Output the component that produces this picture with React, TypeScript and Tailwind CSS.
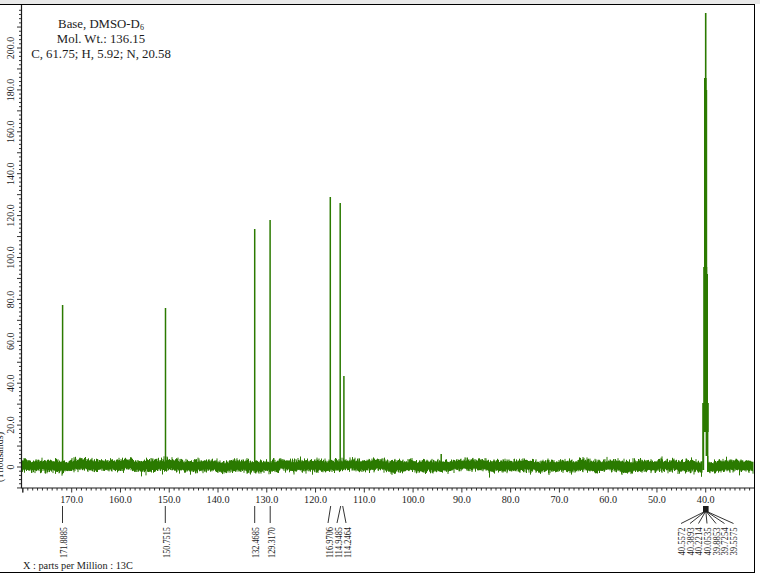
import React from "react";

const GREEN = "#2b7a00";
const INK = "#1c1c1c";

// ppm -> pixel on the page
const xOf = (ppm: number) => 71.7 + (170 - ppm) * 4.877;
const yOf = (val: number) => 467 - val * 2.095;

// small seeded generator so the noise stays the same on each load
const makeRand = (seed: number) => () => {
  seed = (seed + 0x6d2b79f5) | 0;
  let t = Math.imul(seed ^ (seed >>> 15), 1 | seed);
  t = (t + Math.imul(t ^ (t >>> 7), 61 | t)) ^ t;
  return ((t ^ (t >>> 14)) >>> 0) / 4294967296;
};

const buildNoise = () => {
  const rand = makeRand(1337);
  const gauss = () => Math.abs(rand() + rand() + rand() - 1.5) * 2;
  let d = "";
  let drift = 0;
  for (let x = 22; x < 753.5; x += 0.5) {
    if (x > 702 && x < 708.5) continue;
    drift += (rand() - 0.5) * 0.8;
    drift *= 0.95;
    const spikeUp = rand() > 0.94 ? rand() * 3 : 0;
    const spikeDown = rand() > 0.94 ? rand() * 3.5 : 0;
    const top = 465.8 + drift - 3.4 - gauss() * 1.8 - spikeUp;
    const bottom = 465.8 + drift + 3.4 + gauss() * 1.8 + spikeDown;
    d += `M${x} ${top.toFixed(1)}L${x} ${bottom.toFixed(1)}`;
  }
  return d;
};

const peaks = [
  { x: 62.6, top: 305 },
  { x: 165.5, top: 308 },
  { x: 254.7, top: 229 },
  { x: 270.1, top: 220 },
  { x: 330.3, top: 197 },
  { x: 340.2, top: 203 },
  { x: 343.9, top: 376 },
  { x: 441.2, top: 454 },
];

const singleLabels = [
  { x: 62.5, text: "171.8885" },
  { x: 165.3, text: "150.7515" },
  { x: 254.7, text: "132.4685" },
  { x: 270.2, text: "129.3170" },
];

const slantLabels = [
  { from: 330.7, to: 328, labelX: 329, text: "116.9706" },
  { from: 340.7, to: 337, labelX: 338, text: "114.9485" },
  { from: 342.7, to: 346, labelX: 347, text: "114.2464" },
];

const solventLabels = [
  { x: 681, text: "40.5572" },
  { x: 690, text: "40.3893" },
  { x: 698.5, text: "40.2214" },
  { x: 707, text: "40.0535" },
  { x: 716, text: "39.8853" },
  { x: 724.5, text: "39.7254" },
  { x: 733.5, text: "39.5575" },
];

const xMajor = [170, 160, 150, 140, 130, 120, 110, 100, 90, 80, 70, 60, 50, 40];
const yMajor = [200, 180, 160, 140, 120, 100, 80, 60, 40, 20];

const Spectrum = () => {
  const xTicks: number[] = [];
  for (let p = 180; p >= 30; p--) {
    const x = xOf(p);
    if (x >= 22 && x <= 754) xTicks.push(p);
  }
  const yTicks: number[] = [];
  for (let v = -10; v <= 220; v += 2) {
    const y = yOf(v);
    if (y > 8 && y <= 488) yTicks.push(v);
  }

  return (
    <svg viewBox="0 5 754 567" className="block w-[754px] h-[567px]" style={{ fontFamily: '"Liberation Serif", serif' }}>
      {/* noise band */}
      <path d={buildNoise()} stroke={GREEN} strokeWidth={1} fill="none" />

      {/* peaks */}
      {peaks.map((p) => (
        <line key={p.x} x1={p.x} x2={p.x} y1={p.top} y2={464} stroke={GREEN} strokeWidth={1.5} />
      ))}

      {/* DMSO multiplet */}
      <g fill={GREEN}>
        <rect x={704.9} y={13} width={1.6} height={65} />
        <rect x={704} y={78} width={2.8} height={12} />
        <rect x={704} y={90} width={3.2} height={177} />
        <rect x={703.2} y={267} width={4.2} height={7} />
        <rect x={703.2} y={274} width={4.8} height={129} />
        <rect x={702.2} y={403} width={6.6} height={29} />
        <rect x={702.2} y={432} width={2} height={38} />
        <rect x={705.6} y={432} width={2.8} height={24} />
        <rect x={707} y={456} width={1.6} height={16} />
      </g>

      {/* left axis */}
      <line x1={21.5} x2={21.5} y1={5} y2={488} stroke={INK} strokeWidth={1.2} />
      {yTicks.map((v) => (
        <line
          key={v}
          x1={v % 10 === 0 ? 17 : 19}
          x2={21.5}
          y1={yOf(v)}
          y2={yOf(v)}
          stroke={INK}
          strokeWidth={0.9}
        />
      ))}
      {yMajor.map((v) => (
        <text
          key={v}
          transform={`translate(14 ${yOf(v)}) rotate(-90)`}
          textAnchor="middle"
          fontSize={10}
          fill={INK}
        >
          {v.toFixed(1)}
        </text>
      ))}
      <text transform={`translate(14 ${yOf(0)}) rotate(-90)`} textAnchor="middle" fontSize={10} fill={INK}>
        0
      </text>
      <text transform="translate(3 482) rotate(-90)" fontSize={10} fill={INK}>
        (Thousands)
      </text>

      {/* bottom axis */}
      <line x1={21} x2={754} y1={488} y2={488} stroke={INK} strokeWidth={1.1} />
      {xTicks.map((p) => (
        <line
          key={p}
          x1={xOf(p)}
          x2={xOf(p)}
          y1={488}
          y2={p % 10 === 0 ? 492.5 : 490.5}
          stroke={INK}
          strokeWidth={0.9}
        />
      ))}
      <line x1={22.7} x2={22.7} y1={488} y2={492.5} stroke={INK} strokeWidth={0.9} />
      {xMajor.map((p) => (
        <text key={p} x={xOf(p)} y={502.5} textAnchor="middle" fontSize={10.2} fill={INK}>
          {p.toFixed(1)}
        </text>
      ))}

      {/* peak picks */}
      {singleLabels.map((l) => (
        <g key={l.text}>
          <line x1={l.x} x2={l.x} y1={506} y2={523} stroke={INK} strokeWidth={0.9} />
          <text
            transform={`translate(${l.x + 4.5} 558) rotate(-90)`}
            fontSize={9.5}
            textLength={31}
            lengthAdjust="spacingAndGlyphs"
            fill={INK}
          >
            {l.text}
          </text>
        </g>
      ))}
      {slantLabels.map((l) => (
        <g key={l.text}>
          <line x1={l.from} x2={l.to} y1={506} y2={523} stroke={INK} strokeWidth={0.9} />
          <text
            transform={`translate(${l.labelX + 4} 558) rotate(-90)`}
            fontSize={9.5}
            textLength={31}
            lengthAdjust="spacingAndGlyphs"
            fill={INK}
          >
            {l.text}
          </text>
        </g>
      ))}

      <rect x={703} y={506} width={5.6} height={6.4} fill={INK} />
      {solventLabels.map((l) => (
        <g key={l.text}>
          <line x1={705.8} x2={l.x} y1={511} y2={523.5} stroke={INK} strokeWidth={0.9} />
          <text
            transform={`translate(${l.x + 3.5} 555.5) rotate(-90)`}
            fontSize={9.5}
            textLength={28}
            lengthAdjust="spacingAndGlyphs"
            fill={INK}
          >
            {l.text}
          </text>
        </g>
      ))}
    </svg>
  );
};

export default function App() {
  return (
    <div className="w-[760px] h-[580px] bg-white overflow-hidden font-['Liberation_Serif',serif] text-[#1c1c1c]">
      <div className="h-[4px] bg-[#e9e9e9]" />
      <div className="relative w-[755px] h-[569px] border-t border-r border-b border-black box-border">
        <Spectrum />
        <div className="absolute left-[31px] top-[12px] w-[140px] text-center text-[12.8px] leading-[15px] whitespace-nowrap">
          <div>
            Base, DMSO-D<sub className="text-[8px]">6</sub>
          </div>
          <div>Mol. Wt.: 136.15</div>
          <div>C, 61.75; H, 5.92; N, 20.58</div>
        </div>
        <div className="absolute left-[23px] bottom-[0px] text-[10.3px] leading-[12px] whitespace-nowrap">
          X : parts per Million : 13C
        </div>
      </div>
    </div>
  );
}
